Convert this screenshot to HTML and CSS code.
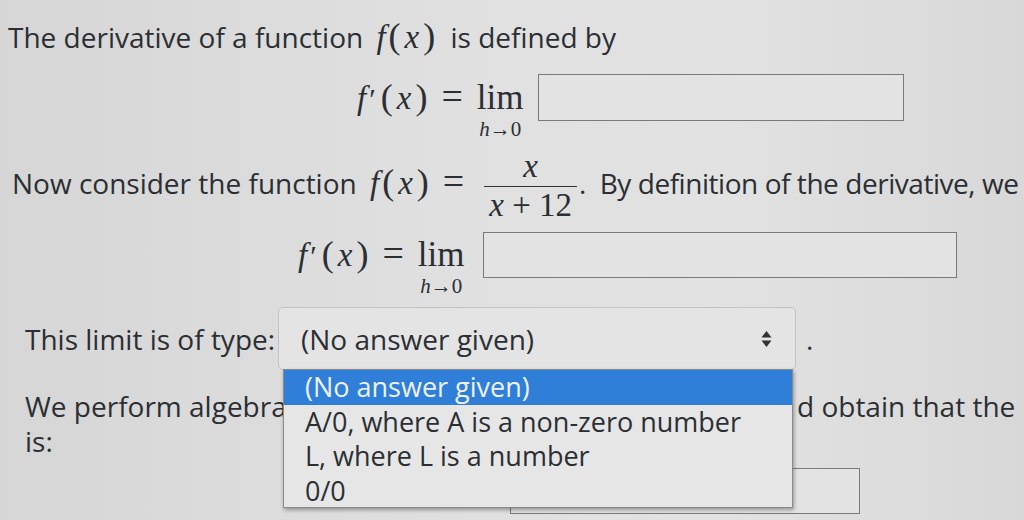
FILE: index.html
```html
<!DOCTYPE html>
<html>
<head>
<meta charset="utf-8">
<link rel="stylesheet" href="styles.css">
</head>
<body>
<div class="page">
  <p class="line l1">The derivative of a function <span class="m inl"><i class="f">f</i><span class="p">(</span><i class="x">x</i><span class="p">)</span></span> is defined by</p>

  <div class="disp d1">
    <div class="mrow">
      <span class="m"><i class="f">f</i><span class="pr">&#8242;</span><span class="p">(</span><i class="x">x</i><span class="p">)</span><span class="eq">=</span></span>
      <span class="lim"><span class="limw">lim</span><span class="limsub"><i>h</i>&#8594;0</span></span>
    </div>
    <span class="box b1"></span>
  </div>

  <p class="line l2">Now consider the function <span class="m inl2"><i class="f">f</i><span class="p">(</span><i class="x">x</i><span class="p">)</span><span class="eq">=</span></span><span class="frac"><span class="num"><i>x</i></span><span class="den"><i>x</i> + 12</span></span><span class="stop">.</span> <span class="tail">By definition of the derivative, we</span></p>

  <div class="disp d2">
    <div class="mrow">
      <span class="m"><i class="f">f</i><span class="pr">&#8242;</span><span class="p">(</span><i class="x">x</i><span class="p">)</span><span class="eq">=</span></span>
      <span class="lim"><span class="limw">lim</span><span class="limsub"><i>h</i>&#8594;0</span></span>
    </div>
    <span class="box b2"></span>
  </div>

  <div class="typerow">
    <span class="label">This limit is of type:</span>
    <div class="selwrap">
      <div class="select">
        <span class="seltext">(No answer given)</span>
        <svg class="arrows" width="11" height="18" viewBox="0 0 11 18"><path d="M5.5 1 L10.5 7.5 L0.5 7.5 Z M0.5 10.5 L10.5 10.5 L5.5 17 Z" fill="#2f3236"/></svg>
      </div>
      <div class="dropdown">
        <div class="opt sel">(No answer given)</div>
        <div class="opt">A/0, where A is a non-zero number</div>
        <div class="opt">L, where L is a number</div>
        <div class="opt">0/0</div>
      </div>
    </div>
    <span class="dot">.</span>
  </div>

  <p class="line l3"><span class="frag1">We perform algebra</span><span class="frag2">d obtain that the</span></p>
  <p class="line l4">is:</p>

  <div class="disp d3">
    <span class="box b3"></span>
  </div>
</div>
</body>
</html>
```

FILE: styles.css
```css
html, body {
  margin: 0;
  padding: 0;
  width: 1024px;
  height: 520px;
  overflow: hidden;
}
body {
  background: linear-gradient(90deg, #d6d6d6 0%, #e0e0e0 45%, #e2e2e2 70%, #d8d8d8 100%);
  font-family: "Open Sans", "Liberation Sans", sans-serif;
  color: #2b2f33;
}
.page {
  padding-top: 20px;
  position: relative;
}
.line {
  margin: 0;
  font-size: 28px;
  line-height: 34px;
  white-space: nowrap;
}
.m {
  font-family: "Liberation Serif", "DejaVu Serif", serif;
  font-size: 33px;
  white-space: nowrap;
}
.line .m { line-height: 20px; }
.m i { font-style: italic; }
.m .f { margin-right: 3px; }
.m .pr { margin-right: 5px; font-size: 30px; line-height: 0; }
.m .p { font-size: 36px; line-height: 0; }
.m .x { padding: 0 4px; }
.eq { margin: 0 14px; font-size: 38px; line-height: 0; }
.l1 { padding-left: 8px; }
.inl { margin: 0 8px 0 6px; }
.disp {
  display: flex;
  align-items: flex-start;
}
.mrow {
  display: flex;
  align-items: baseline;
  line-height: 32px;
}
.lim {
  display: inline-flex;
  flex-direction: column;
  align-items: center;
  font-family: "Liberation Serif", "DejaVu Serif", serif;
}
.limw { font-size: 35px; line-height: 29px; }
.limsub { font-size: 21px; line-height: 20px; margin-top: 7px; }
.limsub i { font-style: italic; }
.box {
  display: block;
  border: 1.5px solid #7a7a7a;
  background: #e3e3e3;
  box-sizing: border-box;
}
.d1 { margin-top: 20px; padding-left: 357px; }
.d1 .mrow { margin-top: 8px; }
.b1 { width: 366px; height: 47px; margin-left: 14px; }

.l2 { padding-left: 12px; margin-top: 13px; }
.inl2 { margin-left: 6px; }
.frac {
  display: inline-flex;
  flex-direction: column;
  align-items: center;
  vertical-align: middle;
  font-family: "Liberation Serif", "DejaVu Serif", serif;
  font-size: 33px;
  line-height: 28px;
  margin: 0 2px 0 6px;
}
.frac i { font-style: italic; }
.num { padding: 0 8px 6px; }
.den { border-top: 1.5px solid #333; padding: 4px 5px 1px; }
.stop { margin-right: 6px; }
.tail { letter-spacing: -0.45px; }

.d2 { margin-top: 12px; padding-left: 298px; }
.d2 .mrow { margin-top: 7px; }
.b2 { width: 474px; height: 46px; margin-left: 18px; }

.typerow {
  display: flex;
  align-items: center;
  margin-top: 11px;
  padding-left: 25px;
  font-size: 28px;
}
.label { white-space: nowrap; width: 253px; }
.selwrap {
  position: relative;
  z-index: 2;
}
.select {
  width: 518px;
  height: 63px;
  box-sizing: border-box;
  border: 1px solid #c2c2c2;
  border-radius: 5px;
  background: #e4e4e4;
  display: flex;
  align-items: center;
  justify-content: space-between;
  padding: 0 23px 0 22px;
}
.seltext { white-space: nowrap; }
.dot { margin-left: 10px; }
.dropdown {
  position: absolute;
  left: 5px;
  top: 62px;
  width: 510px;
  height: 139px;
  box-sizing: border-box;
  border: 1px solid #8a8a8a;
  background: #e6e6e6;
  box-shadow: 1px 2px 4px rgba(0,0,0,0.35);
}
.opt {
  height: 34.5px;
  line-height: 34px;
  padding-left: 21px;
  font-size: 27px;
  white-space: nowrap;
}
.opt.sel {
  background: #2f7fd8;
  color: #eef2f8;
}
.l3 {
  margin-top: 19px;
  padding-left: 25px;
  display: grid;
  grid-template-columns: 772px auto;
}
.frag1, .frag2 { white-space: nowrap; }
.l4 { padding-left: 25px; margin-top: 1px; }
.d3 { margin-top: 10px; padding-left: 510px; }
.b3 { width: 350px; height: 46px; }
```
